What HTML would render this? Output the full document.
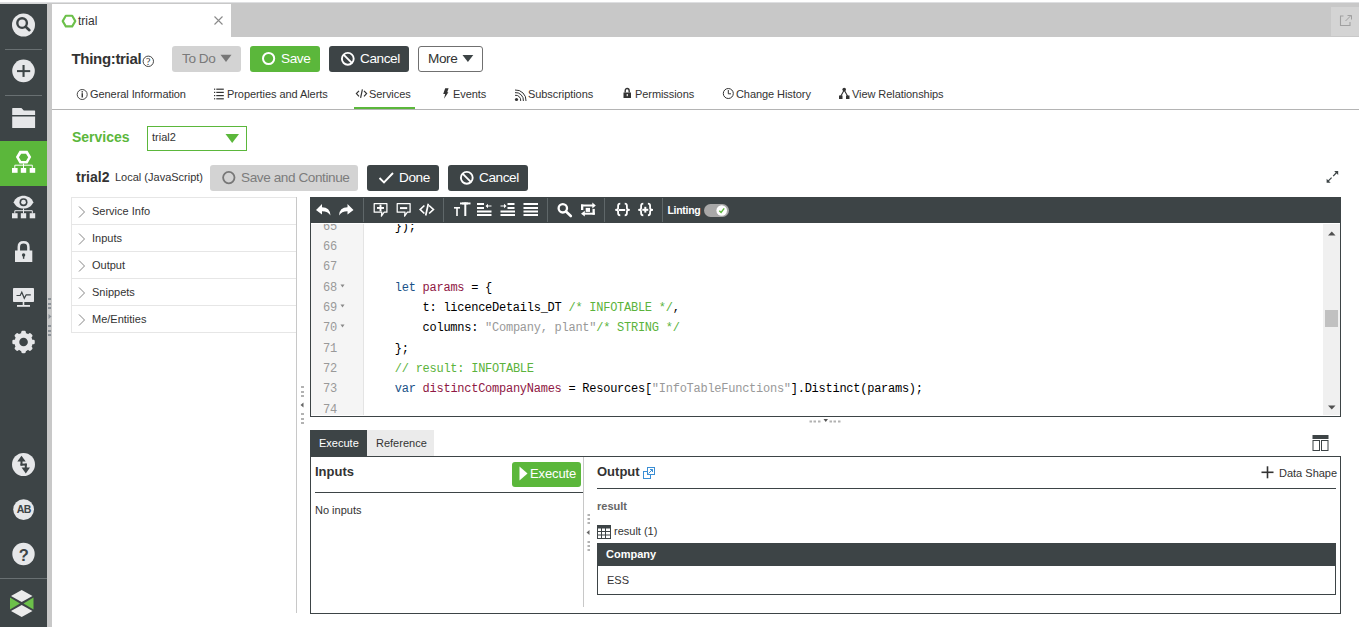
<!DOCTYPE html>
<html><head><meta charset="utf-8">
<style>
*{box-sizing:border-box;margin:0;padding:0}
html,body{width:1359px;height:627px;overflow:hidden;background:#fff;font-family:"Liberation Sans",sans-serif;color:#333}
.a{position:absolute}
.btn{position:absolute;height:26px;border-radius:3px;font-size:13.6px;letter-spacing:-0.42px;line-height:26px;white-space:nowrap}
.nav{position:absolute;top:88px;font-size:11px;line-height:12px;color:#333;white-space:nowrap;letter-spacing:-0.07px}
.row{position:absolute;left:72px;width:224px;height:27px;border-bottom:1px solid #e6e6e6;font-size:11px;line-height:27px;color:#333;padding-left:20px}
.code{position:absolute;left:311px;font-family:"Liberation Mono",monospace;font-size:11.5px;white-space:pre;line-height:20px}
</style></head><body>
<svg class="a" style="left:0;top:0" width="47" height="627" viewBox="0 0 47 627">
<rect x="0" y="3" width="47" height="1" fill="#d5d6d6"/><rect x="0" y="4" width="47" height="623" fill="#3d4446"/>
<!-- search -->
<circle cx="23.5" cy="25" r="11.5" fill="#e6e7e9"/>
<circle cx="22.1" cy="23.1" r="4.8" fill="none" stroke="#3d4446" stroke-width="2.4"/>
<line x1="25.7" y1="26.7" x2="29.4" y2="30.2" stroke="#3d4446" stroke-width="2.6" stroke-linecap="round"/>
<rect x="5" y="49" width="37" height="1" fill="#697072"/>
<!-- plus -->
<circle cx="23.5" cy="70.9" r="11.3" fill="#e6e7e9"/>
<rect x="17" y="70.1" width="13.2" height="2" fill="#3d4446"/>
<rect x="22.5" y="65" width="2.1" height="11.9" fill="#3d4446"/>
<rect x="5" y="95" width="37" height="1" fill="#697072"/>
<!-- folder -->
<path d="M12.2 108.6 Q12.2 108.1 12.7 108.1 L21.4 108.1 L23.8 110.6 L34.6 110.6 Q35.1 110.6 35.1 111.1 L35.1 115 L12.2 115 Z" fill="#e6e7e9"/>
<path d="M12.2 116.5 L35.1 116.5 L35.1 127.4 Q35.1 127.9 34.6 127.9 L12.7 127.9 Q12.2 127.9 12.2 127.4 Z" fill="#e6e7e9"/>
<!-- active green -->
<rect x="0" y="141" width="47" height="45" fill="#5bb73b"/>
<path fill-rule="evenodd" d="M15.9 157.1 L19.6 150.7 L27.5 150.7 L31.2 157.1 L27.5 163.5 L19.6 163.5 Z M18.9 157.3 L21.2 153.7 L26 153.7 L28.2 157.3 L26 161 L21.2 161 Z" fill="#fff"/>
<path d="M14.8 168.5 L14.8 165.2 L32.3 165.2 L32.3 168.5 M23.5 163.5 L23.5 168.5" fill="none" stroke="#fff" stroke-width="1"/>
<rect x="12" y="168" width="5.6" height="4.8" fill="#fff"/>
<rect x="20.8" y="168" width="5.4" height="4.8" fill="#fff"/>
<rect x="29.7" y="168" width="5.5" height="4.8" fill="#fff"/>
<!-- eye network -->
<path d="M13.7 202.2 C17 193.7 30 193.7 33.3 202.2 C30 210.7 17 210.7 13.7 202.2 Z" fill="#e6e7e9"/>
<circle cx="23.5" cy="202.2" r="4" fill="#3d4446"/>
<circle cx="23.5" cy="202.2" r="2.4" fill="#e6e7e9"/>
<path d="M14.8 213.5 L14.8 210.7 L32.3 210.7 L32.3 213.5 M23.5 208.5 L23.5 213.5" fill="none" stroke="#e6e7e9" stroke-width="1"/>
<rect x="12" y="213.2" width="5.6" height="5.1" fill="#e6e7e9"/>
<rect x="20.8" y="213.2" width="5.4" height="5.1" fill="#e6e7e9"/>
<rect x="29.7" y="213.2" width="5.5" height="5.1" fill="#e6e7e9"/>
<!-- lock -->
<path d="M18.8 251 L18.8 247 Q18.8 242.3 23.6 242.3 Q28.4 242.3 28.4 247 L28.4 251" fill="none" stroke="#e6e7e9" stroke-width="2.5"/>
<rect x="15" y="250.5" width="17.3" height="11.5" fill="#e6e7e9"/>
<circle cx="23.6" cy="255" r="1.7" fill="#3d4446"/>
<rect x="22.9" y="255.5" width="1.4" height="3.3" fill="#3d4446"/>
<!-- monitor -->
<rect x="13" y="288" width="21" height="14" rx="0.8" fill="#e6e7e9"/>
<path d="M16.5 295.5 L20.2 295.5 L21.8 292.3 L24.3 298.3 L26.2 294.8 L30.8 294.8" fill="none" stroke="#3d4446" stroke-width="1.2"/>
<rect x="22.7" y="302" width="1.6" height="3" fill="#e6e7e9"/>
<rect x="17" y="305" width="13" height="1.8" fill="#e6e7e9"/>
<!-- gear -->
<g transform="translate(23.55 342)">
<g fill="#e6e7e9">
<rect x="-2.3" y="-11.2" width="4.6" height="22.4" rx="1.4"/>
<rect x="-2.3" y="-11.2" width="4.6" height="22.4" rx="1.4" transform="rotate(45)"/>
<rect x="-2.3" y="-11.2" width="4.6" height="22.4" rx="1.4" transform="rotate(90)"/>
<rect x="-2.3" y="-11.2" width="4.6" height="22.4" rx="1.4" transform="rotate(135)"/>
<circle r="9.2"/>
</g>
<circle r="4.3" fill="#3d4446"/>
</g>
<!-- arrows circle -->
<circle cx="23.5" cy="464.5" r="11.5" fill="#e6e7e9"/>
<path d="M17.3 461.6 L21.5 455.7 L25.7 461.6 Z" fill="#3d4446"/>
<rect x="20.5" y="461" width="2" height="4.6" fill="#3d4446"/>
<rect x="20.5" y="463.6" width="6.3" height="2" fill="#3d4446"/>
<rect x="24.8" y="463.6" width="2" height="4.6" fill="#3d4446"/>
<path d="M21.6 467.6 L25.8 473.4 L30 467.6 Z" fill="#3d4446"/>
<!-- AB -->
<circle cx="23.6" cy="509.6" r="10.4" fill="#e6e7e9"/>
<text x="23.7" y="513.3" text-anchor="middle" font-family="Liberation Sans" font-weight="bold" font-size="10.5" fill="#3d4446" letter-spacing="-0.6">AB</text>
<!-- ? -->
<circle cx="23.5" cy="554" r="11.2" fill="#e6e7e9"/>
<text x="23.9" y="561" text-anchor="middle" font-family="Liberation Sans" font-weight="bold" font-size="16.5" fill="#3d4446">?</text>
<rect x="0" y="578" width="47" height="1" fill="#697072"/>
<!-- logo -->
<path d="M21.7 590 L32.5 596 L21.7 602 L11 596 Z" fill="#ebebeb"/>
<path d="M21.7 605 L32.5 611 L21.7 617 L11 611 Z" fill="#ebebeb"/>
<path d="M10 597.5 L20 603.5 L10 609.5 Z" fill="#6cc04a"/>
<path d="M33.5 597.5 L23.5 603.5 L33.5 609.5 Z" fill="#6cc04a"/>
</svg>
<div class="a" style="left:47px;top:3px;width:5px;height:624px;background:#c8c8c8"></div>
<div class="a" style="left:0;top:2px;width:1359px;height:1px;background:#dedfe1"></div>
<div class="a" style="left:47px;top:3px;width:1312px;height:34px;background:#c8c8c8"></div>
<div class="a" style="left:1331px;top:7px;width:28px;height:29px;background:#d4d4d4"></div>
<svg class="a" style="left:1338px;top:13px" width="16" height="15" viewBox="0 0 16 15">
<path d="M2.5 3 L5.5 3 M2.5 2.5 L2.5 12.5 L12 12.5 L12 9" fill="none" stroke="#a0a0a0" stroke-width="1.1"/>
<path d="M7.5 8 L13 2.5 M9.5 2.5 L13.5 2.5 L13.5 6.5" fill="none" stroke="#a0a0a0" stroke-width="1"/>
</svg>
<div class="a" style="left:52px;top:4px;width:179px;height:33px;background:#fff"></div>
<svg class="a" style="left:61px;top:13px" width="18" height="16" viewBox="0 0 18 16">
<path d="M4.8 2.8 L11.2 2.8 L14.3 8.1 L11.2 13.4 L4.8 13.4 L1.7 8.1 Z" fill="none" stroke="#6cc04a" stroke-width="2.1" stroke-linejoin="round"/>
</svg>
<div class="a" style="left:78px;top:14px;font-size:12px;line-height:14px;color:#333">trial</div>
<svg class="a" style="left:213px;top:15px" width="11" height="11" viewBox="0 0 11 11">
<path d="M1.5 1.5 L9.5 9.5 M9.5 1.5 L1.5 9.5" stroke="#8a8a8a" stroke-width="1.1"/>
</svg>
<!-- title -->
<div class="a" style="left:71.5px;top:50px;font-size:15px;font-weight:bold;line-height:17px;color:#333;letter-spacing:-0.32px">Thing:trial</div>
<svg class="a" style="left:142px;top:55px" width="13" height="13" viewBox="0 0 13 13"><circle cx="6.3" cy="6.3" r="5.2" fill="none" stroke="#333" stroke-width="0.9"/><text x="6.3" y="10" text-anchor="middle" font-family="Liberation Serif" font-size="10" fill="#333">?</text></svg>
<div class="btn" style="left:172px;top:46px;width:69px;background:#d3d3d3;color:#7a7a7a;padding-left:10px">To Do</div>
<svg class="a" style="left:220px;top:54px" width="13" height="9"><path d="M0.5 0.8 L11.5 0.8 L6 8 Z" fill="#777"/></svg>
<div class="btn" style="left:250px;top:46px;width:70px;background:#5bb73b;color:#fff;padding-left:31px">Save</div>
<svg class="a" style="left:261px;top:51px" width="15" height="15"><circle cx="7.6" cy="7.5" r="5.6" fill="none" stroke="#fff" stroke-width="2"/></svg>
<div class="btn" style="left:329px;top:46px;width:80px;background:#3d4446;color:#fff;padding-left:31px">Cancel</div>
<svg class="a" style="left:340px;top:51px" width="16" height="16"><circle cx="7.8" cy="7.8" r="5.9" fill="none" stroke="#fff" stroke-width="1.9"/><path d="M3.8 3.8 L11.8 11.8" stroke="#fff" stroke-width="1.9"/></svg>
<div class="btn" style="left:418px;top:46px;width:65px;height:26px;background:#fff;border:1px solid #707070;color:#333;padding-left:9px;line-height:24px">More</div>
<svg class="a" style="left:461px;top:54px" width="13" height="9"><path d="M1.5 1 L12.3 1 L6.9 8 Z" fill="#3d4446"/></svg>
<!-- nav -->
<div class="a" style="left:52px;top:109px;width:1307px;height:1px;background:#b4b4b4"></div>
<div class="a" style="left:354px;top:107px;width:61px;height:2px;background:#5bb73b"></div>
<svg class="a" style="left:76px;top:88px" width="13" height="13" viewBox="0 0 13 13"><circle cx="6.2" cy="6.5" r="5" fill="none" stroke="#333" stroke-width="0.9"/><rect x="5.55" y="5.2" width="1.4" height="4.3" fill="#333"/><rect x="5.55" y="3.2" width="1.4" height="1.3" fill="#333"/></svg>
<div class="nav" style="left:90px">General Information</div>
<svg class="a" style="left:213px;top:88px" width="13" height="13" viewBox="0 0 13 13"><g fill="#333"><rect x="1" y="0.6" width="1.2" height="1.2"/><rect x="1" y="3.8" width="1.2" height="1.2"/><rect x="1" y="7" width="1.2" height="1.2"/><rect x="1" y="10.2" width="1.2" height="1.2"/><rect x="3.3" y="0.6" width="7.5" height="1.2"/><rect x="3.3" y="3.8" width="7.5" height="1.2"/><rect x="3.3" y="7" width="7.5" height="1.2"/><rect x="3.3" y="10.2" width="7.5" height="1.2"/></g></svg>
<div class="nav" style="left:227px">Properties and Alerts</div>
<svg class="a" style="left:355px;top:87px" width="13" height="13" viewBox="0 0 13 13"><path d="M4 3.8 L1.4 6.6 L4 9.4 M9 3.8 L11.6 6.6 L9 9.4 M7.4 2.3 L5.6 10.8" fill="none" stroke="#333" stroke-width="1.2"/></svg>
<div class="nav" style="left:369px">Services</div>
<svg class="a" style="left:440px;top:86px" width="12" height="14" viewBox="0 0 12 14"><path d="M5.2 2.3 L8.6 2.3 L7.2 6.3 L8.4 6.3 L4 12.8 L5.2 8 L3.2 8 Z" fill="#333"/></svg>
<div class="nav" style="left:453px">Events</div>
<svg class="a" style="left:514px;top:88.5px" width="14" height="14" viewBox="0 0 14 14"><circle cx="2.5" cy="10.5" r="1.6" fill="#333"/><path d="M1 6.3 A5 5 0 0 1 6.7 12 M1 3.6 A7.7 7.7 0 0 1 9.4 12 M1 1 A10.3 10.3 0 0 1 12 12" fill="none" stroke="#333" stroke-width="1"/></svg>
<div class="nav" style="left:528px">Subscriptions</div>
<svg class="a" style="left:622px;top:87px" width="11" height="13" viewBox="0 0 11 13"><path d="M3.2 5.5 L3.2 4 Q3.2 1.5 5.2 1.5 Q7.2 1.5 7.2 4 L7.2 5.5" fill="none" stroke="#333" stroke-width="1.4"/><rect x="1.5" y="5.5" width="7.5" height="5.5" fill="#333"/><rect x="4.7" y="7" width="1.1" height="2.2" fill="#fff"/></svg>
<div class="nav" style="left:635px">Permissions</div>
<svg class="a" style="left:722px;top:87px" width="13" height="13" viewBox="0 0 13 13"><circle cx="6.3" cy="6.5" r="5" fill="none" stroke="#333" stroke-width="1"/><path d="M6.3 3 L6.3 6.8 L9 6.8" fill="none" stroke="#333" stroke-width="1"/></svg>
<div class="nav" style="left:736px">Change History</div>
<svg class="a" style="left:838px;top:87px" width="13" height="13" viewBox="0 0 13 13"><circle cx="6.2" cy="2.6" r="1.8" fill="#333"/><path d="M6.2 3 L2.6 9.5 M6.2 3 L9.8 9.5" stroke="#333" stroke-width="1.1"/><rect x="1" y="8.5" width="3.5" height="3.5" fill="#333"/><rect x="8" y="8.5" width="3.5" height="3.5" fill="#333"/></svg>
<div class="nav" style="left:852px">View Relationships</div>
<div class="a" style="left:72px;top:129px;font-size:14px;font-weight:bold;line-height:16px;color:#5bb73b">Services</div>
<div class="a" style="left:147px;top:126px;width:100px;height:25px;border:1px solid #5bb73b;background:#fff"></div>
<div class="a" style="left:152px;top:131px;font-size:11px;line-height:13px;color:#333">trial2</div>
<svg class="a" style="left:225px;top:133px" width="15" height="11"><path d="M0.5 1 L14 1 L7.2 10 Z" fill="#5bb73b"/></svg>
<div class="a" style="left:76px;top:169px;font-size:14px;font-weight:bold;line-height:16px;color:#333">trial2</div>
<div class="a" style="left:115px;top:171px;font-size:11px;line-height:13px;color:#333">Local (JavaScript)</div>
<div class="btn" style="left:210px;top:165px;width:148px;background:#d3d3d3;color:#7c7c7c;padding-left:31px">Save and Continue</div>
<svg class="a" style="left:221px;top:170px" width="16" height="16"><circle cx="7.8" cy="7.6" r="5.7" fill="none" stroke="#777" stroke-width="1.8"/></svg>
<div class="btn" style="left:367px;top:165px;width:72px;background:#3d4446;color:#fff;padding-left:32px">Done</div>
<svg class="a" style="left:378px;top:170px" width="17" height="15"><path d="M1.5 8 L6 12.5 L15 3" fill="none" stroke="#fff" stroke-width="1.9"/></svg>
<div class="btn" style="left:448px;top:165px;width:80px;background:#3d4446;color:#fff;padding-left:31px">Cancel</div>
<svg class="a" style="left:459px;top:170px" width="16" height="16"><circle cx="7.8" cy="7.8" r="5.9" fill="none" stroke="#fff" stroke-width="1.9"/><path d="M3.8 3.8 L11.8 11.8" stroke="#fff" stroke-width="1.9"/></svg>
<!-- expand icon -->
<svg class="a" style="left:1324px;top:169px" width="16" height="16" viewBox="0 0 16 16"><path d="M13 3 L9.2 7.2 M3.6 12.6 L7.6 8.6" stroke="#3d4446" stroke-width="1.25"/><path d="M10.2 1.9 L14.2 1.9 L14.2 5.9 Z" fill="#3d4446"/><path d="M2.6 9.7 L2.6 13.7 L6.6 13.7 Z" fill="#3d4446"/></svg>
<!-- left panel -->
<div class="a" style="left:71px;top:197px;width:225px;height:136px;border-left:1px solid #e6e6e6;border-top:1px solid #e6e6e6"></div>
<div class="row" style="top:198px">Service Info</div>
<div class="row" style="top:225px">Inputs</div>
<div class="row" style="top:252px">Output</div>
<div class="row" style="top:279px">Snippets</div>
<div class="row" style="top:306px">Me/Entities</div>
<svg class="a" style="left:76px;top:198px" width="12" height="136" viewBox="0 0 12 136">
<g fill="none" stroke="#666" stroke-width="0.8">
<path d="M3 8.5 L8.5 14 L3 19.5"/>
<path d="M3 35.5 L8.5 41 L3 46.5"/>
<path d="M3 62.5 L8.5 68 L3 73.5"/>
<path d="M3 89.5 L8.5 95 L3 100.5"/>
<path d="M3 116.5 L8.5 122 L3 127.5"/>
</g></svg>
<div class="a" style="left:296px;top:197px;width:1px;height:416px;background:#c8c8c8"></div>
<svg class="a" style="left:299px;top:384px" width="6" height="42"><g fill="#b2b2b2"><rect x="2" y="2" width="3" height="2"/><rect x="2" y="7" width="3" height="2"/><rect x="2" y="11" width="3" height="2"/><rect x="2" y="29" width="3" height="2"/><rect x="2" y="34" width="3" height="2"/><rect x="2" y="38" width="3" height="2"/></g><path d="M4.5 18.5 L1.5 21 L4.5 23.5 Z" fill="#666"/></svg>
<svg class="a" style="left:47px;top:296px" width="5" height="42"><g fill="#8a9096"><rect x="1" y="2" width="3" height="2"/><rect x="1" y="7" width="3" height="2"/><rect x="1" y="11" width="3" height="2"/><rect x="1" y="29" width="3" height="2"/><rect x="1" y="34" width="3" height="2"/><rect x="1" y="38" width="3" height="2"/></g><path d="M1.5 18 L4.5 20.5 L1.5 23 Z" fill="#8a9096"/></svg>
<!-- toolbar -->
<div class="a" style="left:310px;top:197px;width:1031px;height:26px;background:#3d4446"></div>
<div class="a" style="left:310px;top:223px;width:1031px;height:194px;border:1px solid #3d4446;border-top:none;background:#fff;overflow:hidden">
  <div class="a" style="left:0;top:1px;width:53px;height:191px;background:#f5f5f5;border-right:1px solid #e4e4e4"></div>
  <div class="a" style="left:1012px;top:1px;width:17px;height:191px;background:#f0f0f0"></div>
  <div class="a" style="left:1014px;top:87px;width:13px;height:17px;background:#c1c1c1"></div>
  <svg class="a" style="left:1017px;top:8px" width="8" height="5"><path d="M0 4.5 L3.75 0.5 L7.5 4.5 Z" fill="#505050"/></svg>
  <svg class="a" style="left:1017px;top:182px" width="8" height="5"><path d="M0 0.5 L3.75 4.5 L7.5 0.5 Z" fill="#505050"/></svg>
</div>
<div id="code" class="a" style="left:311px;top:224px;width:1012px;height:192px;overflow:hidden;font-family:'Liberation Mono',monospace;font-size:12px;letter-spacing:-0.255px;line-height:20.33px;white-space:pre;color:#000">
<div class="a" style="left:0;top:-7.4px;width:26px;text-align:right;color:#999">65
66
67
68
69
70
71
72
73
74</div>
<svg class="a" style="left:29px;top:1px" width="8" height="192"><g fill="#8a8a8a"><path d="M0.5 59.5 L4.5 59.5 L2.5 62.5 Z"/><path d="M0.5 79.5 L4.5 79.5 L2.5 82.5 Z"/><path d="M0.5 99.5 L4.5 99.5 L2.5 102.5 Z"/></g></svg>
<div class="a" style="left:56px;top:-7.4px"><span>    });</span>


<span>    <b class="k">let</b> <b class="v">params</b> = {</span>
<span>        t: licenceDetails_DT <b class="c">/* INFOTABLE */</b>,</span>
<span>        columns: <b class="s">"Company, plant"</b><b class="c">/* STRING */</b></span>
<span>    };</span>
<span>    <b class="c">// result: INFOTABLE</b></span>
<span>    <b class="k">var</b> <b class="v">distinctCompanyNames</b> = Resources[<b class="s">"InfoTableFunctions"</b>].Distinct(params);</span>
</div>
</div>
<style>
#code b{font-weight:normal}
#code .k{color:#1a5288}
#code .v{color:#8f1844}
#code .c{color:#5bb33c}
#code .s{color:#999}
</style>
<svg class="a" style="left:310px;top:197px" width="440" height="26" viewBox="0 0 440 26">
<g fill="#fff" stroke="none">
<!-- undo: tip at left -->
<path d="M6 13 L12 7 L12 10.3 Q20 10.3 20.5 18.5 Q18 14.2 12 14.2 L12 17.5 Z"/>
<!-- redo -->
<path d="M43.5 13 L37.5 7 L37.5 10.3 Q29.5 10.3 29 18.5 Q31.5 14.2 37.5 14.2 L37.5 17.5 Z"/>
</g>
<g fill="#5f6769"><rect x="53" y="1" width="1" height="24"/><rect x="133" y="1" width="1" height="24"/><rect x="237" y="1" width="1" height="24"/><rect x="294" y="1" width="1" height="24"/><rect x="352" y="1" width="1" height="24"/></g>
<g fill="none" stroke="#fff" stroke-width="1.25" stroke-linejoin="round">
<path d="M64.2 6.6 L76.9 6.6 L76.9 15.2 L74.2 15.2 L71.4 19.2 L71.8 15.2 L64.2 15.2 Z"/>
<path d="M87.2 6.6 L100.1 6.6 L100.1 15.2 L97.4 15.2 L94.6 19.2 L95 15.2 L87.2 15.2 Z"/>
</g>
<g fill="#fff">
<rect x="67" y="10" width="7" height="1.9"/><rect x="69.55" y="7.6" width="1.9" height="6.8"/>
<rect x="90" y="10.1" width="7.2" height="2"/>
</g>
<g fill="none" stroke="#fff" stroke-width="1.7">
<path d="M114.4 8.5 L110.2 12.5 L114.4 16.5 M119.1 8.5 L123.4 12.5 L119.1 16.5"/>
<path d="M118.3 6.8 L115.7 18.5"/>
</g>
<g fill="#fff">
<!-- font size -->
<rect x="152" y="5.5" width="6" height="1.9"/><rect x="150" y="5.5" width="10.5" height="1.9"/><rect x="154.3" y="5.5" width="2" height="13.5"/>
<rect x="144" y="10" width="6" height="1.6"/><rect x="146.2" y="10" width="1.6" height="9"/>
<!-- outdent -->
<rect x="167" y="6" width="7" height="2"/><rect x="167" y="10" width="7" height="2"/><rect x="167" y="13.5" width="14.5" height="2"/><rect x="167" y="17" width="14.5" height="2"/>
<path d="M175.5 9 L178 6.7 L178 8.4 L181.5 8.4 L181.5 9.6 L178 9.6 L178 11.3 Z"/>
<!-- indent -->
<rect x="197.5" y="6" width="7" height="2"/><rect x="197.5" y="10" width="7" height="2"/><rect x="190.5" y="13.5" width="14.5" height="2"/><rect x="190.5" y="17" width="14.5" height="2"/>
<path d="M196.5 9 L194 6.7 L194 8.4 L190.5 8.4 L190.5 9.6 L194 9.6 L194 11.3 Z"/>
<!-- justify -->
<rect x="213.5" y="6" width="14.5" height="2"/><rect x="213.5" y="10" width="14.5" height="2"/><rect x="213.5" y="13.5" width="14.5" height="2"/><rect x="213.5" y="17" width="14.5" height="2"/>
</g>
<!-- search -->
<circle cx="252.8" cy="11.3" r="4.2" fill="none" stroke="#fff" stroke-width="2.3"/>
<path d="M256 14.5 L260.8 19" stroke="#fff" stroke-width="2.6" stroke-linecap="round"/>
<!-- replace -->
<g fill="#fff">
<rect x="271" y="7.5" width="12" height="2"/>
<path d="M282.3 5.6 L285.8 8.5 L282.3 11.4 Z"/>
<rect x="271" y="7.5" width="2.3" height="5.5"/>
<rect x="275.7" y="10.9" width="4.3" height="4"/>
<rect x="282.5" y="11.9" width="2.3" height="5.8"/>
<rect x="274" y="15.7" width="10.8" height="2"/>
<path d="M274.8 13.8 L271 16.7 L274.8 19.6 Z"/>
</g>
<!-- braces -->
<g fill="none" stroke="#fff" stroke-width="1.8">
<path d="M310.3 6.7 Q308.1 6.7 308.1 8.7 L308.1 11.200000000000001 Q308.1 12.8 305.2 12.8 Q308.1 12.8 308.1 14.4 L308.1 16.3 Q308.1 18.3 310.3 18.3"/>
<path d="M314.7 6.7 Q316.9 6.7 316.9 8.7 L316.9 11.200000000000001 Q316.9 12.8 319.8 12.8 Q316.9 12.8 316.9 14.4 L316.9 16.3 Q316.9 18.3 314.7 18.3"/>
<path d="M333.3 6.7 Q331.1 6.7 331.1 8.7 L331.1 11.200000000000001 Q331.1 12.8 328.2 12.8 Q331.1 12.8 331.1 14.4 L331.1 16.3 Q331.1 18.3 333.3 18.3"/>
<path d="M337.90000000000003 6.7 Q340.1 6.7 340.1 8.7 L340.1 11.200000000000001 Q340.1 12.8 343 12.8 Q340.1 12.8 340.1 14.4 L340.1 16.3 Q340.1 18.3 337.90000000000003 18.3"/>
</g>
<g fill="#fff"><rect x="309" y="12" width="6.2" height="2"/><rect x="332.3" y="11.8" width="6" height="2"/><rect x="334.3" y="9.8" width="2" height="5.8"/></g>
<text x="357.5" y="17" font-family="Liberation Sans" font-weight="bold" font-size="10.5" fill="#fff" letter-spacing="-0.3">Linting</text>
<rect x="394" y="7" width="25" height="13" rx="6.5" fill="#a8a8a8"/>
<circle cx="411.7" cy="13.5" r="5.3" fill="#fff"/>
<path d="M409.3 13.7 L411.1 15.5 L414.2 11.4" fill="none" stroke="#5bb73b" stroke-width="1.4"/>
</svg>
<!-- horizontal splitter dots -->
<svg class="a" style="left:808px;top:418px" width="34" height="6"><g fill="#b2b2b2"><rect x="1.5" y="2.5" width="2.5" height="2"/><rect x="5.5" y="2.5" width="2.5" height="2"/><rect x="10" y="2.5" width="2.5" height="2"/><rect x="21.5" y="2.5" width="2.5" height="2"/><rect x="25.5" y="2.5" width="2.5" height="2"/><rect x="30" y="2.5" width="2.5" height="2"/></g><path d="M15.5 1 L20 1 L17.75 4 Z" fill="#555"/></svg>
<!-- layout icon -->
<svg class="a" style="left:1311px;top:434px" width="19" height="18"><rect x="1.5" y="1" width="16" height="4" fill="#3d4446"/><rect x="2" y="6.5" width="6.5" height="10" fill="none" stroke="#3d4446" stroke-width="1"/><rect x="10.5" y="6.5" width="6.5" height="10" fill="none" stroke="#3d4446" stroke-width="1"/></svg>
<!-- tabs -->
<div class="a" style="left:310px;top:430px;width:57px;height:26px;background:#3d4446;color:#fff;font-size:11px;line-height:26px;padding-left:9px">Execute</div>
<div class="a" style="left:367px;top:430px;width:67px;height:26px;background:#ebebeb;color:#333;font-size:11px;line-height:26px;padding-left:9px">Reference</div>
<!-- panel -->
<div class="a" style="left:310px;top:456px;width:1031px;height:158px;border:1px solid #3d4446;background:#fff"></div>
<div class="a" style="left:583px;top:457px;width:1px;height:150px;background:#c8c8c8"></div>
<div class="a" style="left:315px;top:464px;font-size:13px;font-weight:bold;line-height:15px;color:#333">Inputs</div>
<div class="btn" style="left:512px;top:462px;width:69px;height:25px;background:#5bb73b;color:#fff;font-size:13px;letter-spacing:-0.12px;line-height:23px;padding-left:18px">Execute</div>
<svg class="a" style="left:518px;top:465px" width="12" height="18"><path d="M1.5 1.5 L9.5 8.5 L1.5 15.5 Z" fill="#fff"/></svg>
<div class="a" style="left:315px;top:492px;width:268px;height:1px;background:#3d4446"></div>
<div class="a" style="left:315px;top:504px;font-size:11px;line-height:13px;color:#333">No inputs</div>
<div class="a" style="left:597px;top:464px;font-size:13px;font-weight:bold;line-height:15px;color:#333">Output</div>
<svg class="a" style="left:642px;top:466px" width="14" height="14" viewBox="0 0 14 14"><rect x="1.5" y="5.5" width="7" height="7" fill="none" stroke="#3b8ed4" stroke-width="1"/><rect x="5.5" y="1.5" width="7" height="7" fill="#fff" stroke="#3b8ed4" stroke-width="1"/><path d="M6.5 7.5 L10.5 3.5 M8 3.5 L10.5 3.5 L10.5 6" fill="none" stroke="#3b8ed4" stroke-width="1"/></svg>
<svg class="a" style="left:1261px;top:466px" width="13" height="13"><rect x="0.5" y="5.5" width="12" height="1.6" fill="#333"/><rect x="5.7" y="0.3" width="1.6" height="12" fill="#333"/></svg>
<div class="a" style="left:1279px;top:467px;font-size:11px;line-height:13px;color:#333">Data Shape</div>
<div class="a" style="left:597px;top:488px;width:739px;height:1px;background:#3d4446"></div>
<div class="a" style="left:597px;top:500px;font-size:11px;font-weight:bold;line-height:13px;color:#666">result</div>
<svg class="a" style="left:596px;top:524px" width="16" height="16" viewBox="0 0 16 16"><rect x="1.5" y="1.5" width="13" height="13" fill="#fff" stroke="#3d4446" stroke-width="1"/><rect x="1.5" y="1.5" width="13" height="3" fill="#3d4446"/><g stroke="#3d4446" stroke-width="1"><path d="M5.5 4 L5.5 14 M9.5 4 L9.5 14 M2 7.5 L14 7.5 M2 11 L14 11"/></g></svg>
<div class="a" style="left:614px;top:525px;font-size:11px;line-height:13px;color:#333">result (1)</div>
<div class="a" style="left:597px;top:543px;width:739px;height:52px;border:1px solid #3d4446;border-top:none;background:#fff"></div>
<div class="a" style="left:597px;top:543px;width:739px;height:23px;background:#3d4446;color:#fff;font-weight:bold;font-size:11px;line-height:23px;padding-left:9px">Company</div>
<div class="a" style="left:607px;top:574px;font-size:11px;line-height:13px;color:#333">ESS</div>
<svg class="a" style="left:585px;top:512px" width="6" height="42"><g fill="#b2b2b2"><rect x="2.5" y="2" width="2.5" height="2"/><rect x="2.5" y="6" width="2.5" height="2"/><rect x="2.5" y="10" width="2.5" height="2"/><rect x="2.5" y="29" width="2.5" height="2"/><rect x="2.5" y="33" width="2.5" height="2"/><rect x="2.5" y="37" width="2.5" height="2"/></g><path d="M4.5 18 L1.5 20.5 L4.5 23 Z" fill="#666"/></svg>
</body></html>
